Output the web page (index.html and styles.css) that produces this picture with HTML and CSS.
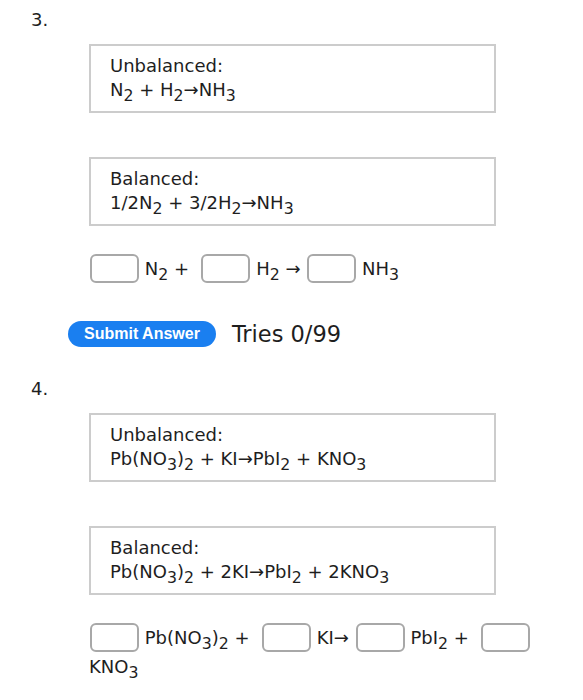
FILE: index.html
```html
<!DOCTYPE html>
<html lang="en">
<head>
<meta charset="utf-8">
<title>Balancing equations</title>
<link rel="stylesheet" href="styles.css">
</head>
<body>
<div class="page">
  <section class="question">
    <div class="qnum">3.</div>
    <div class="qbody">
      <div class="eqbox">
        <div>Unbalanced:</div>
        <div>N<sub>2</sub> + H<sub>2</sub>→NH<sub>3</sub></div>
      </div>
      <div class="eqbox">
        <div>Balanced:</div>
        <div>1/2N<sub>2</sub> + 3/2H<sub>2</sub>→NH<sub>3</sub></div>
      </div>
      <div class="eq-row"><span class="blank"></span> N<sub>2</sub> + &nbsp;<span class="blank"></span> H<sub>2</sub> → <span class="blank"></span> NH<sub>3</sub></div>
    </div>
    <div class="submit-row">
      <button class="submit" type="button">Submit Answer</button>
      <span class="tries">Tries 0/99</span>
    </div>
  </section>

  <section class="question q4">
    <div class="qnum">4.</div>
    <div class="qbody">
      <div class="eqbox">
        <div>Unbalanced:</div>
        <div>Pb(NO<sub>3</sub>)<sub>2</sub> + KI→PbI<sub>2</sub> + KNO<sub>3</sub></div>
      </div>
      <div class="eqbox">
        <div>Balanced:</div>
        <div>Pb(NO<sub>3</sub>)<sub>2</sub> + 2KI→PbI<sub>2</sub> + 2KNO<sub>3</sub></div>
      </div>
      <div class="eq-row"><span class="blank"></span> Pb(NO<sub>3</sub>)<sub>2</sub> + &nbsp;<span class="blank"></span> KI→ <span class="blank"></span> PbI<sub>2</sub> + &nbsp;<span class="blank"></span> KNO<sub>3</sub></div>
    </div>
  </section>
</div>
</body>
</html>
```

FILE: styles.css
```css
html, body {
  margin: 0;
  background: #ffffff;
}

body {
  font-family: "DejaVu Sans", Verdana, sans-serif;
  font-size: 18px;
  line-height: 24px;
  color: #1e1e1e;
}

.page {
  padding-top: 8px;
}

.qnum {
  padding-left: 31px;
}

.qbody {
  margin-left: 89px;
}

.eqbox {
  box-sizing: border-box;
  width: 407px;
  margin-top: 12px;
  padding: 8px 19px 9px;
  border: 2px solid #cccccc;
}

.eqbox + .eqbox {
  margin-top: 44px;
}

sub {
  font-size: 0.875em;
  line-height: 0;
  vertical-align: -5px;
}

.eq-row {
  max-width: 470px;
  margin-top: 28px;
}

.blank {
  display: inline-block;
  box-sizing: border-box;
  width: 49px;
  height: 29px;
  margin-left: 1px;
  margin-bottom: 3px;
  border: 2px solid #a8a8a8;
  border-radius: 6px;
  background: #ffffff;
  vertical-align: -11px;
}

.submit-row {
  display: flex;
  align-items: center;
  gap: 16px;
  margin-top: 35px;
  margin-left: 68px;
}

.submit {
  height: 26px;
  padding: 0 16px;
  border: none;
  border-radius: 13px;
  background: #1a7ff0;
  color: #ffffff;
  font-family: "Liberation Sans", Arial, sans-serif;
  font-weight: bold;
  font-size: 16px;
  line-height: 26px;
  cursor: pointer;
}

.tries {
  font-size: 22.5px;
  line-height: 26px;
}

.q4 {
  margin-top: 30px;
}
```
